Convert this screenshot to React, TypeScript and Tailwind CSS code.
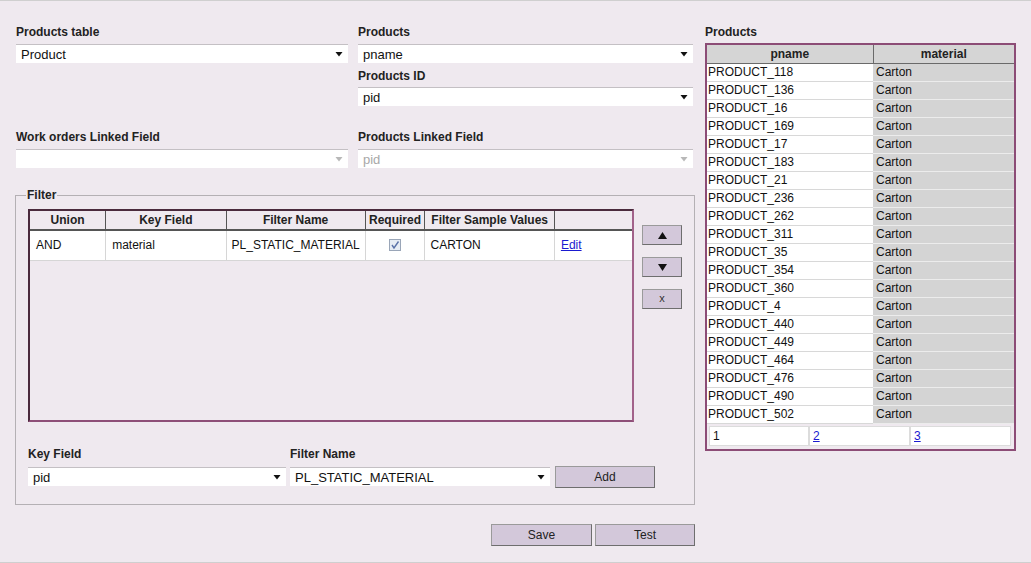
import React from "react";

const FONT = { fontFamily: '"Liberation Sans", Arial, sans-serif' };

function Caret({ disabled }: { disabled?: boolean }) {
  return (
    <svg width="8" height="5" viewBox="0 0 8 5" className="shrink-0">
      <path d="M0.5 0 L7.5 0 L4 4.5 Z" fill={disabled ? "#b8b8b8" : "#111"} />
    </svg>
  );
}

function Select({ value, disabled, w }: { value: string; disabled?: boolean; w: string }) {
  return (
    <div
      className={`${w} h-[19px] bg-white border-t border-[#c4c0c4] flex items-center justify-between pl-[5px] pr-[5px] text-[13px] leading-none ${
        disabled ? "text-[#a8a8a8]" : "text-[#111]"
      }`}
    >
      <span>{value}</span>
      <Caret disabled={disabled} />
    </div>
  );
}

function Label({ children }: { children: React.ReactNode }) {
  return <div className="h-[14px] leading-[14px] text-[12px] font-bold text-[#222]">{children}</div>;
}

function Btn({ children, w, h }: { children: React.ReactNode; w: string; h: string }) {
  return (
    <div
      className={`${w} ${h} bg-[#d3c8da] border border-t-[#9a9a9a] border-l-[#9a9a9a] border-r-[#6e6e6e] border-b-[#6e6e6e] flex items-center justify-center text-[12px] text-[#222]`}
    >
      {children}
    </div>
  );
}

const products = [
  "PRODUCT_118",
  "PRODUCT_136",
  "PRODUCT_16",
  "PRODUCT_169",
  "PRODUCT_17",
  "PRODUCT_183",
  "PRODUCT_21",
  "PRODUCT_236",
  "PRODUCT_262",
  "PRODUCT_311",
  "PRODUCT_35",
  "PRODUCT_354",
  "PRODUCT_360",
  "PRODUCT_4",
  "PRODUCT_440",
  "PRODUCT_449",
  "PRODUCT_464",
  "PRODUCT_476",
  "PRODUCT_490",
  "PRODUCT_502",
];

export default function App() {
  return (
    <div
      style={FONT}
      className="w-[1031px] h-[563px] bg-[#efe9ef] border-t border-b border-[#cfcfcf] flex overflow-hidden text-[12px] text-[#111]"
    >
      {/* Left area */}
      <div className="w-[695px] pl-[16px] pt-[24px] flex flex-col shrink-0">
        <div className="flex gap-[10px]">
          <div className="flex flex-col">
            <Label>Products table</Label>
            <div className="mt-[5px]">
              <Select value="Product" w="w-[332px]" />
            </div>
          </div>
          <div className="flex flex-col">
            <Label>Products</Label>
            <div className="mt-[5px]">
              <Select value="pname" w="w-[335px]" />
            </div>
            <div className="mt-[6px]">
              <Label>Products ID</Label>
            </div>
            <div className="mt-[4px]">
              <Select value="pid" w="w-[335px]" />
            </div>
          </div>
        </div>

        <div className="flex gap-[10px] mt-[24px]">
          <div className="flex flex-col">
            <Label>Work orders Linked Field</Label>
            <div className="mt-[5px]">
              <Select value="" disabled w="w-[332px]" />
            </div>
          </div>
          <div className="flex flex-col">
            <Label>Products Linked Field</Label>
            <div className="mt-[5px]">
              <Select value="pid" disabled w="w-[335px]" />
            </div>
          </div>
        </div>

        {/* Filter fieldset */}
        <fieldset className="mt-[20px] -ml-px w-[680px] border border-[#b4b0b4]">
          <legend className="ml-[10px] px-[1px] h-[14px] leading-[14px] text-[12px] font-bold text-[#222]">
            Filter
          </legend>
          <div className="pl-[12px] pt-[7px] pb-[18px]">
            <div className="flex items-start">
              <div className="w-[606px] h-[213px] border-2 border-t-[#4a2a3c] border-l-[#4a2a3c] border-r-[#a2628a] border-b-[#8e4f78] bg-[#efe9ef]">
                <table className="border-collapse text-[12px]">
                  <thead>
                    <tr className="h-[18px] font-bold text-[#222]">
                      <th className="w-[76px] border-r border-b-2 border-[#555] font-bold">Union</th>
                      <th className="w-[121px] border-r border-b-2 border-[#555] font-bold">Key Field</th>
                      <th className="w-[139px] border-r border-b-2 border-[#555] font-bold">Filter Name</th>
                      <th className="w-[60px] border-r border-b-2 border-[#555] font-bold">Required</th>
                      <th className="w-[130px] border-r border-b-2 border-[#555] font-bold">Filter Sample Values</th>
                      <th className="w-[78px] border-b-2 border-[#555]"></th>
                    </tr>
                  </thead>
                  <tbody>
                    <tr className="h-[30px] bg-white align-middle">
                      <td className="border-r border-b border-[#d6d6d6] pl-[6px]">AND</td>
                      <td className="border-r border-b border-[#d6d6d6] pl-[6px]">material</td>
                      <td className="border-r border-b border-[#d6d6d6] pl-[5px]">PL_STATIC_MATERIAL</td>
                      <td className="border-r border-b border-[#d6d6d6]">
                        <div className="flex justify-center">
                          <svg width="12" height="12" viewBox="0 0 12 12">
                            <rect x="0.5" y="0.5" width="11" height="11" fill="#e6ecf4" stroke="#9aa6b8" />
                            <path d="M3 6 L5 9 L9.5 2.5" fill="none" stroke="#5a72a8" strokeWidth="1.4" />
                          </svg>
                        </div>
                      </td>
                      <td className="border-r border-b border-[#d6d6d6] pl-[5px]">CARTON</td>
                      <td className="border-b border-[#d6d6d6] pl-[6px]">
                        <span className="text-[#1a1ad0] underline">Edit</span>
                      </td>
                    </tr>
                  </tbody>
                </table>
              </div>
              <div className="ml-[8px] mt-[16px] flex flex-col gap-[12px]">
                <Btn w="w-[40px]" h="h-[20px]">
                  <svg width="9" height="7" viewBox="0 0 9 7">
                    <path d="M4.5 0 L9 7 L0 7 Z" fill="#111" />
                  </svg>
                </Btn>
                <Btn w="w-[40px]" h="h-[20px]">
                  <svg width="9" height="7" viewBox="0 0 9 7">
                    <path d="M0 0 L9 0 L4.5 7 Z" fill="#111" />
                  </svg>
                </Btn>
                <Btn w="w-[40px]" h="h-[20px]">
                  <span className="text-[11px] text-[#333] leading-none -mt-[2px]">x</span>
                </Btn>
              </div>
            </div>

            <div className="flex items-end mt-[25px]">
              <div className="flex flex-col">
                <Label>Key Field</Label>
                <div className="mt-[6px]">
                  <Select value="pid" w="w-[258px]" />
                </div>
              </div>
              <div className="flex flex-col ml-[4px]">
                <Label>Filter Name</Label>
                <div className="mt-[6px]">
                  <Select value="PL_STATIC_MATERIAL" w="w-[260px]" />
                </div>
              </div>
              <div className="ml-[5px] mb-[-2px]">
                <Btn w="w-[100px]" h="h-[22px]">Add</Btn>
              </div>
            </div>
          </div>
        </fieldset>

        <div className="mt-[19px] w-[679px] flex justify-end gap-[3px]">
          <Btn w="w-[101px]" h="h-[22px]">Save</Btn>
          <Btn w="w-[100px]" h="h-[22px]">Test</Btn>
        </div>
      </div>

      {/* Right area */}
      <div className="ml-[10px] pt-[24px] flex flex-col">
        <Label>Products</Label>
        <div className="mt-[4px] w-[311px] border-2 border-[#8c4c76] bg-[#efe9ef]">
          <table className="border-collapse w-[307px] text-[12px] leading-none">
            <thead>
              <tr className="h-[18px] bg-[#d5d5d5]">
                <th className="w-[166px] border-r border-b border-[#6a6a6a] font-bold text-[#222]">pname</th>
                <th className="border-b border-[#6a6a6a] font-bold text-[#222]">material</th>
              </tr>
            </thead>
            <tbody>
              {products.map((p) => (
                <tr key={p} className="h-[18px]">
                  <td className="bg-white border-b border-[#d8d8d8] pl-[1px]">{p}</td>
                  <td className="bg-[#d4d4d4] border-b border-[#ececec] pl-[3px]">Carton</td>
                </tr>
              ))}
            </tbody>
          </table>
          <div className="flex px-[2px] pt-[2px] pb-[3px]">
            <div className="w-[100px] h-[20px] bg-white border border-[#dcdcdc] flex items-center pl-[3px]">1</div>
            <div className="w-[101px] h-[20px] bg-white border border-[#dcdcdc] flex items-center pl-[3px]">
              <span className="text-[#1a1ad0] underline">2</span>
            </div>
            <div className="w-[101px] h-[20px] bg-white border border-[#dcdcdc] flex items-center pl-[3px]">
              <span className="text-[#1a1ad0] underline">3</span>
            </div>
          </div>
        </div>
      </div>
    </div>
  );
}
